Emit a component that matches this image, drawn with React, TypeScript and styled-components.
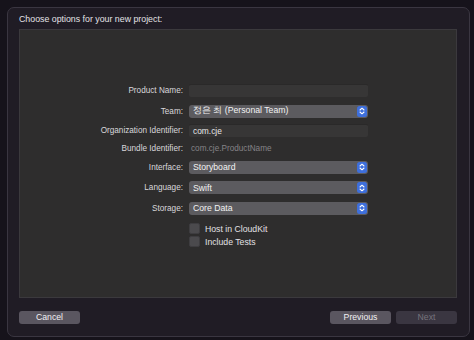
import React from 'react';
import styled, {createGlobalStyle} from 'styled-components';

const Global = createGlobalStyle`
  html, body {
    margin: 0;
    padding: 0;
    background: #16131b;
  }
  body {
    font-family: "Liberation Sans", Arial, sans-serif;
    -webkit-font-smoothing: antialiased;
  }
`

const Page = styled.div`
  width: 474px;
  height: 340px;
  box-sizing: border-box;
  padding: 7px 4px 3px 7px;
  background: #16131b;
`

const Sheet = styled.div`
  height: 100%;
  box-sizing: border-box;
  background: #201c25;
  border: 1px solid #3a3641;
  border-radius: 7px;
  padding: 0 12px 0 11px;
  display: flex;
  flex-direction: column;
`

const Title = styled.div`
  height: 21px;
  line-height: 23px;
  font-size: 8.8px;
  color: #e4e2e6;
`

const Panel = styled.div`
  height: 269px;
  box-sizing: border-box;
  background: #2e2d2d;
  border: 1px solid #3b393d;
  padding-top: 50px;
  display: flex;
  flex-direction: column;
`

const Row = styled.div<{$h: number}>`
  height: ${p => p.$h}px;
  display: flex;
  align-items: center;
`

const Label = styled.div`
  width: 169px;
  text-align: right;
  font-size: 8.2px;
  color: #d9d7db;
  padding-right: 6px;
  box-sizing: border-box;
`

const TextField = styled.div`
  width: 179px;
  height: 13px;
  box-sizing: border-box;
  background: #373636;
  border-top: 1px solid #2a2929;
  border-radius: 2px;
  font-size: 8.4px;
  color: #e6e6e6;
  line-height: 12px;
  padding-left: 4px;
`

const Value = styled.div`
  font-size: 8.2px;
  color: #858387;
  padding-left: 2px;
`

const Popup = styled.div`
  width: 179px;
  height: 13px;
  box-sizing: border-box;
  background: #5c5b5f;
  border-radius: 3px;
  display: flex;
  align-items: center;
  justify-content: space-between;
  padding: 0 1px 0 4px;
  font-size: 8.7px;
  color: #f2f2f2;
`

const Stepper = styled.div`
  width: 10px;
  height: 11px;
  border-radius: 2.5px;
  background: #3e6fdc;
  display: flex;
  align-items: center;
  justify-content: center;
`

const CheckGroup = styled.div`
  padding-top: 4px;
  display: flex;
  flex-direction: column;
`

const CheckRow = styled.div`
  display: flex;
  align-items: center;
  gap: 5px;
  margin-left: 169px;
  font-size: 8.7px;
  color: #e2e0e4;
`

const Box = styled.div`
  width: 9px;
  height: 9px;
  border-radius: 2px;
  background: #4b4a4d;
  border: 1px solid #3e3d40;
`

const Footer = styled.div`
  flex: 1;
  display: flex;
  align-items: flex-start;
  gap: 5px;
  padding-top: 13px;
`

const Spacer = styled.div`
  flex: 1;
`

const Button = styled.div<{$disabled?: boolean}>`
  width: 61px;
  height: 13px;
  border-radius: 3px;
  background: ${p => p.$disabled ? '#3a3641' : '#5a5660'};
  color: ${p => p.$disabled ? '#77737d' : '#f1f0f2'};
  font-size: 8.7px;
  line-height: 13px;
  text-align: center;
`

const Arrows = () => (
    <svg width="6" height="8" viewBox="0 0 6 8" fill="none">
        <path d="M1 3 L3 1.2 L5 3" stroke="white" strokeWidth="1.1" strokeLinecap="round" strokeLinejoin="round"/>
        <path d="M1 5 L3 6.8 L5 5" stroke="white" strokeWidth="1.1" strokeLinecap="round" strokeLinejoin="round"/>
    </svg>
)

const Select = ({value}: {value: string}) => (
    <Popup>
        <span>{value}</span>
        <Stepper><Arrows/></Stepper>
    </Popup>
)

const App = () => {
    return (
        <Page>
            <Global/>
            <Sheet>
                <Title>Choose options for your new project:</Title>
                <Panel>
                    <Row $h={21}>
                        <Label>Product Name:</Label>
                        <TextField/>
                    </Row>
                    <Row $h={20}>
                        <Label>Team:</Label>
                        <Select value="정은 최 (Personal Team)"/>
                    </Row>
                    <Row $h={19}>
                        <Label>Organization Identifier:</Label>
                        <TextField>com.cje</TextField>
                    </Row>
                    <Row $h={17}>
                        <Label>Bundle Identifier:</Label>
                        <Value>com.cje.ProductName</Value>
                    </Row>
                    <Row $h={20}>
                        <Label>Interface:</Label>
                        <Select value="Storyboard"/>
                    </Row>
                    <Row $h={21}>
                        <Label>Language:</Label>
                        <Select value="Swift"/>
                    </Row>
                    <Row $h={20}>
                        <Label>Storage:</Label>
                        <Select value="Core Data"/>
                    </Row>
                    <CheckGroup>
                        <Row $h={13}>
                            <CheckRow><Box/>Host in CloudKit</CheckRow>
                        </Row>
                        <Row $h={13}>
                            <CheckRow><Box/>Include Tests</CheckRow>
                        </Row>
                    </CheckGroup>
                </Panel>
                <Footer>
                    <Button>Cancel</Button>
                    <Spacer/>
                    <Button>Previous</Button>
                    <Button $disabled>Next</Button>
                </Footer>
            </Sheet>
        </Page>
    )
}

export default App;
